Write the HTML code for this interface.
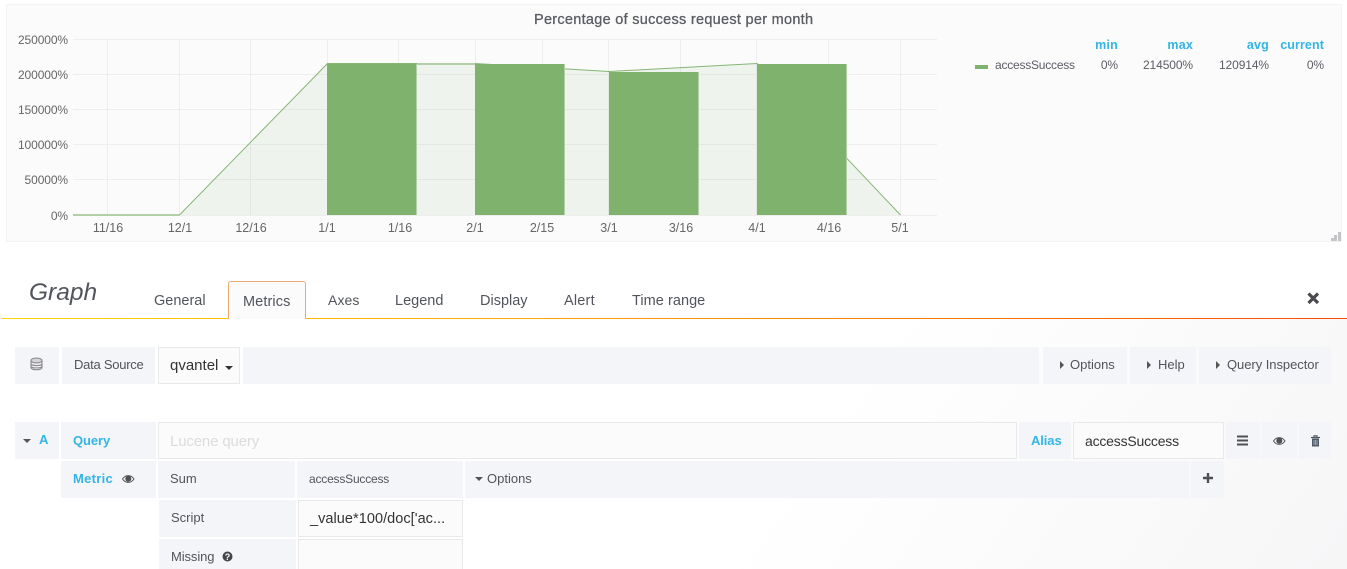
<!DOCTYPE html>
<html><head><meta charset="utf-8">
<style>
html,body{margin:0;padding:0;width:1347px;height:569px;overflow:hidden}
body{position:relative;font-family:"Liberation Sans",sans-serif;background:#fff;color:#52545c}
.b{position:absolute;background:#f4f5f8}
.i{position:absolute;background:#fbfbfb;border:1px solid #e9e9ea;box-sizing:border-box}
.t{position:absolute;white-space:nowrap;font-size:13px;line-height:16px}
.blue{color:#33b5e5;font-weight:bold}
.y{font-size:12px;letter-spacing:-.1px;color:#666;text-align:right;width:62px;left:6px;line-height:14px}
.x{font-size:12.5px;color:#666;text-align:center;width:50px;top:221px;line-height:14px}
.r{text-align:right}
.v{font-size:12px;letter-spacing:-.1px;color:#5b5d63}
</style></head><body>
<div style="position:absolute;left:0;top:243px;width:1347px;height:326px;background:linear-gradient(125deg,#fff 60%,#f6f6f7 100%)"></div>
<div style="position:absolute;left:0;top:243px;width:1347px;height:76px;background:#fff"></div>
<div style="position:absolute;left:6px;top:4px;width:1334px;height:236px;background:#fbfbfc;border:1px solid #f3f3f4"></div>
<svg style="position:absolute;left:0;top:0" width="1347" height="245">
<g stroke="#eeeeef" stroke-width="1" fill="none">
<path d="M73 39.5H937M73 74.5H937M73 109.5H937M73 144.5H937M73 179.5H937M73 215.5H937"/>
<path d="M107.5 39V215M179.5 39V215M250.5 39V215M327.5 39V215M398.5 39V215M475.5 39V215M542.5 39V215M608.5 39V215M680.5 39V215M756.5 39V215M828.5 39V215M900.5 39V215"/>
</g>
<path d="M179.5 215L327.5 63.5H475L609 71.5L757 63.5L900.5 215Z" fill="#7eb26d" fill-opacity=".1"/>
<path d="M73 215H179.5L327.5 63.5H475L609 71.5L757 63.5L900.5 215" fill="none" stroke="#7eb26d" stroke-opacity=".95" stroke-width="1"/>
<path d="M73 215H179.5" stroke="#b2cfa8" stroke-width="2"/>
<path d="M327 215V64H417V215ZM475 215V64H565V215ZM609 215V72H699V215ZM757 215V64H847V215Z" fill="#7fb26d" />
<path d="M417 64H475" stroke="#b2cfa8" stroke-width="2"/>
<path d="M416.5 64V215M564.5 64V215M698.5 72V215M846.5 64V215" stroke="#b2cfa8"/>
<g fill="#c4c4c6"><rect x="1338" y="232" width="3" height="3"/><rect x="1334" y="235" width="3" height="3"/><rect x="1338" y="235" width="3" height="3"/><rect x="1331" y="238" width="3" height="3"/><rect x="1334" y="238" width="3" height="3"/><rect x="1338" y="238" width="3" height="3"/></g>
</svg>
<div class="t" style="left:534px;top:12px;font-size:14.5px;color:#5b5d63;-webkit-text-stroke:.3px #5b5d63;letter-spacing:.28px">Percentage of success request per month</div>
<div class="t y" style="top:33px">250000%</div><div class="t y" style="top:68px">200000%</div><div class="t y" style="top:103px">150000%</div><div class="t y" style="top:138px">100000%</div><div class="t y" style="top:173px">50000%</div><div class="t y" style="top:209px">0%</div>
<div class="t x" style="left:83px">11/16</div><div class="t x" style="left:155px">12/1</div><div class="t x" style="left:226px">12/16</div><div class="t x" style="left:302px">1/1</div><div class="t x" style="left:375px">1/16</div><div class="t x" style="left:450px">2/1</div><div class="t x" style="left:517px">2/15</div><div class="t x" style="left:584px">3/1</div><div class="t x" style="left:656px">3/16</div><div class="t x" style="left:732px">4/1</div><div class="t x" style="left:804px">4/16</div><div class="t x" style="left:875px">5/1</div>

<div class="t blue r" style="left:1068px;width:50px;top:37px;font-size:12.5px;letter-spacing:.2px">min</div>
<div class="t blue r" style="left:1143px;width:50px;top:37px;font-size:12.5px;letter-spacing:.2px">max</div>
<div class="t blue r" style="left:1219px;width:50px;top:37px;font-size:12.5px;letter-spacing:.2px">avg</div>
<div class="t blue r" style="left:1264px;width:60px;top:37px;font-size:12.5px;letter-spacing:.1px">current</div>
<div style="position:absolute;left:975px;top:65px;width:13px;height:4px;background:#7eb26d"></div>
<div class="t v" style="left:995px;top:57px;letter-spacing:-.22px">accessSuccess</div>
<div class="t r v" style="left:1068px;width:50px;top:57px">0%</div>
<div class="t r v" style="left:1123px;width:70px;top:57px">214500%</div>
<div class="t r v" style="left:1199px;width:70px;top:57px">120914%</div>
<div class="t r v" style="left:1274px;width:50px;top:57px">0%</div>

<div class="t" style="left:29px;top:276px;font-size:24.5px;line-height:34px;font-style:italic;color:#52545c">Graph</div>
<div style="position:absolute;left:1px;top:318px;width:1346px;height:1px;background:linear-gradient(90deg,#ffd500,#ff9d00 45%,#ff4b00)"></div>
<div style="position:absolute;left:228px;top:281px;width:78px;height:38px;box-sizing:border-box;background:#fbfbfc;border:1px solid #e8ab74;border-bottom:0;border-radius:3px 3px 0 0"></div>
<div class="t" style="left:154px;top:293px;font-size:14.5px">General</div>
<div class="t" style="left:243px;top:294px;font-size:14.5px;letter-spacing:.1px">Metrics</div>
<div class="t" style="left:328px;top:292px;font-size:14px;letter-spacing:.1px">Axes</div>
<div class="t" style="left:395px;top:293px;font-size:14.5px">Legend</div>
<div class="t" style="left:480px;top:293px;font-size:14.5px">Display</div>
<div class="t" style="left:564px;top:293px;font-size:14.5px;letter-spacing:.2px">Alert</div>
<div class="t" style="left:632px;top:293px;font-size:14.5px;letter-spacing:.05px">Time range</div>
<svg style="position:absolute;left:1306px;top:291px" width="15" height="15"><path d="M2.5 2.5L12 12M12 2.5L2.5 12" stroke="#4a4a4f" stroke-width="3.2"/></svg>

<div class="b" style="left:15px;top:347px;width:44px;height:37px"></div>
<svg style="position:absolute;left:29px;top:357px" width="15" height="15" fill="none" stroke="#8a8a8f" stroke-width="1.1"><ellipse cx="7.5" cy="3.5" rx="5.5" ry="2.4" fill="#d5d5d8"/><path d="M2 3.5V10.5C2 13.5 13 13.5 13 10.5V3.5M2 6.5C2 9.3 13 9.3 13 6.5M2 9C2 11.6 13 11.6 13 9"/></svg>
<div class="b" style="left:62px;top:347px;width:93px;height:37px"></div>
<div class="t" style="left:74px;top:357px;letter-spacing:-.25px">Data Source</div>
<div class="i" style="left:158px;top:347px;width:82px;height:37px"></div>
<div class="t" style="left:170px;top:358px;font-size:15px;color:#333">qvantel</div>
<div style="position:absolute;left:225px;top:366px;border:4px solid transparent;border-top:4px solid #333;border-bottom:0"></div>
<div class="b" style="left:243px;top:347px;width:796px;height:37px"></div>
<div class="b" style="left:1043px;top:347px;width:84px;height:37px"></div>
<div class="b" style="left:1130px;top:347px;width:66px;height:37px"></div>
<div class="b" style="left:1199px;top:347px;width:132px;height:37px"></div>
<div style="position:absolute;left:1060px;top:361px;border:4px solid transparent;border-left:4px solid #555;border-right:0"></div>
<div style="position:absolute;left:1147px;top:361px;border:4px solid transparent;border-left:4px solid #555;border-right:0"></div>
<div style="position:absolute;left:1216px;top:361px;border:4px solid transparent;border-left:4px solid #555;border-right:0"></div>
<div class="t" style="left:1070px;top:357px">Options</div>
<div class="t" style="left:1158px;top:357px">Help</div>
<div class="t" style="left:1227px;top:357px;letter-spacing:-.05px">Query Inspector</div>

<div class="b" style="left:15px;top:422px;width:44px;height:37px"></div>
<div style="position:absolute;left:23px;top:439px;border:4px solid transparent;border-top:4px solid #555;border-bottom:0"></div>
<div class="t blue" style="left:39px;top:432px">A</div>
<div class="b" style="left:61px;top:422px;width:95px;height:37px"></div>
<div class="t blue" style="left:73px;top:433px;letter-spacing:-.1px">Query</div>
<div class="i" style="left:158px;top:422px;width:859px;height:37px"></div>
<div class="t" style="left:170px;top:434px;font-size:15px;letter-spacing:-.15px;color:#dcdcde">Lucene query</div>
<div class="b" style="left:1019px;top:422px;width:52px;height:37px"></div>
<div class="t blue" style="left:1031px;top:433px;letter-spacing:-.1px">Alias</div>
<div class="i" style="left:1073px;top:422px;width:151px;height:37px"></div>
<div class="t" style="left:1085px;top:433px;font-size:14px;letter-spacing:-.2px;color:#333">accessSuccess</div>
<div class="b" style="left:1226px;top:422px;width:34px;height:37px"></div>
<div class="b" style="left:1262px;top:422px;width:35px;height:37px"></div>
<div class="b" style="left:1299px;top:422px;width:32px;height:37px"></div>
<svg style="position:absolute;left:1237px;top:435px" width="12" height="12"><path d="M0 1.5H11M0 5.5H11M0 9.5H11" stroke="#4f4f55" stroke-width="2"/></svg>
<svg style="position:absolute;left:1273px;top:435px" width="13" height="12"><path d="M.5 6C3.5 1.5 9 1.5 12 6C9 10.5 3.5 10.5 .5 6Z" fill="none" stroke="#555" stroke-width="1"/><circle cx="6.3" cy="5.8" r="3" fill="#4f4f55"/></svg>
<svg style="position:absolute;left:1310px;top:435px" width="11" height="12"><path d="M1 2.5H10M4 2V.8H7V2" stroke="#4f5a66" stroke-width="1.2" fill="none"/><path d="M2 3.5H9V11.5H2Z" fill="#4f5a66"/><path d="M4 5V10M5.5 5V10M7 5V10" stroke="#a8b8cc" stroke-width=".8"/></svg>

<div class="b" style="left:61px;top:461px;width:95px;height:37px"></div>
<div class="t blue" style="left:73px;top:471px;letter-spacing:.3px">Metric</div>
<svg style="position:absolute;left:122px;top:473px" width="13" height="12"><path d="M.5 6C3.5 1.5 9 1.5 12 6C9 10.5 3.5 10.5 .5 6Z" fill="none" stroke="#555" stroke-width="1"/><circle cx="6.3" cy="5.8" r="3" fill="#4f4f55"/></svg>
<div class="b" style="left:158px;top:461px;width:137px;height:37px"></div>
<div class="t" style="left:170px;top:471px">Sum</div>
<div class="b" style="left:297px;top:461px;width:166px;height:37px"></div>
<div class="t" style="left:309px;top:471px;font-size:12px;letter-spacing:-.2px">accessSuccess</div>
<div class="b" style="left:465px;top:461px;width:724px;height:37px"></div>
<div style="position:absolute;left:475px;top:477px;border:4px solid transparent;border-top:4px solid #555;border-bottom:0"></div>
<div class="t" style="left:487px;top:471px">Options</div>
<div class="b" style="left:1191px;top:461px;width:33px;height:37px"></div>
<svg style="position:absolute;left:1203px;top:473px" width="10" height="10"><path d="M5 0V10M0 5H10" stroke="#4f4f55" stroke-width="2.4"/></svg>

<div class="b" style="left:159px;top:500px;width:137px;height:37px"></div>
<div class="t" style="left:171px;top:510px">Script</div>
<div class="i" style="left:298px;top:500px;width:165px;height:37px"></div>
<div class="t" style="left:310px;top:511px;font-size:14.5px;letter-spacing:.05px;color:#333">_value*100/doc['ac...</div>
<div class="b" style="left:159px;top:539px;width:137px;height:30px"></div>
<div class="t" style="left:171px;top:549px;letter-spacing:-.1px">Missing</div>
<svg style="position:absolute;left:222px;top:551px" width="11" height="11"><circle cx="5.5" cy="5.5" r="5" fill="#45454a"/><text x="5.5" y="9" font-size="9" font-weight="bold" text-anchor="middle" fill="#fff" font-family="Liberation Sans">?</text></svg>
<div class="i" style="left:298px;top:539px;width:165px;height:30px;border-bottom:0"></div>
</body></html>
